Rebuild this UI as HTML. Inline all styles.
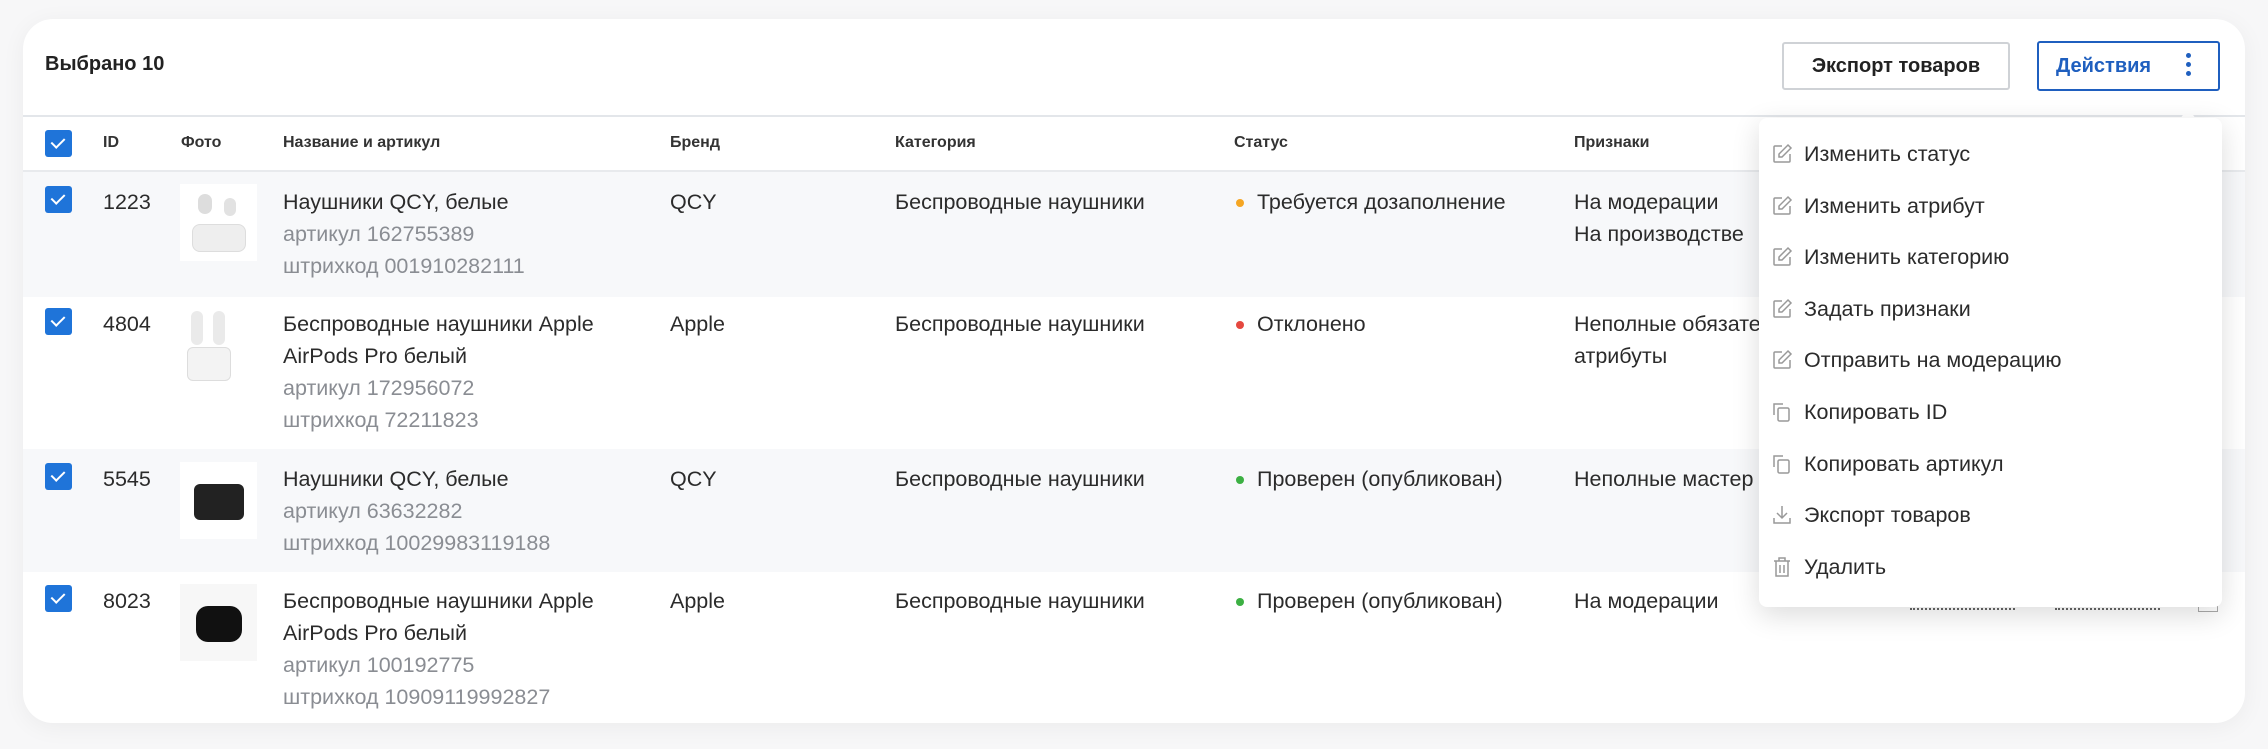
<!DOCTYPE html>
<html><head><meta charset="utf-8"><style>
*{margin:0;padding:0;box-sizing:border-box}
body{width:2268px;height:749px;background:#f7f7f8;font-family:"Liberation Sans",Arial,sans-serif;color:#222;position:relative;overflow:hidden}
.card{position:absolute;left:23px;top:19px;width:2222px;height:704px;background:#fff;border-radius:30px;box-shadow:0 4px 24px rgba(0,0,0,.05);overflow:hidden}
.a{position:absolute;white-space:nowrap}
.h{font-size:16px;font-weight:bold;color:#333;top:134px}
.t{font-size:21.5px;line-height:32px;color:#2b2b2b}
.g{color:#8a8d93}
.cb{position:absolute;width:27px;height:27px;background:#1f74d9;border-radius:3px}
.cb:after{content:"";position:absolute;left:9px;top:5px;width:6px;height:11px;border:solid #fff;border-width:0 2.5px 2.5px 0;transform:rotate(45deg)}
.dot{position:absolute;width:8px;height:8px;border-radius:50%}
.row{position:absolute;left:23px;width:2222px;background:#f7f8fa}
.menu{position:absolute;left:1759px;top:118px;width:463px;height:489px;background:#fff;border-radius:8px;box-shadow:0 8px 28px rgba(0,0,0,.14)}
.mi{position:absolute;left:45px;font-size:21.5px;color:#2b2b2b}
.ic{position:absolute;left:12px;width:22px;height:22px}
</style></head><body>
<div class="card"></div>
<div class="row" style="top:171px;height:126px"></div>
<div class="row" style="top:449px;height:123px"></div>
<div class="a" style="left:23px;top:115px;width:2222px;height:2px;background:#e3e6ea"></div>
<div class="a" style="left:23px;top:170px;width:2222px;height:2px;background:#e8eaed"></div>

<div class="a" style="left:45px;top:53px;font-size:20px;font-weight:bold;color:#222">Выбрано 10</div>
<div class="a" style="left:1782px;top:42px;width:228px;height:48px;border:2px solid #cfd2d6;border-radius:3px;font-size:20px;font-weight:bold;text-align:center;line-height:44px;color:#222">Экспорт товаров</div>
<div class="a" style="left:2037px;top:41px;width:183px;height:50px;border:2px solid #1f5fbf;border-radius:3px;font-size:20px;font-weight:bold;color:#1f5fbf;line-height:46px;padding-left:17px">Действия</div>
<div class="a" style="left:2186px;top:53px;width:5px;height:5px;border-radius:50%;background:#1f5fbf;box-shadow:0 9px 0 #1f5fbf,0 18px 0 #1f5fbf"></div>

<div class="cb" style="left:45px;top:130px"></div>
<div class="a h" style="left:103px">ID</div>
<div class="a h" style="left:181px">Фото</div>
<div class="a h" style="left:283px">Название и артикул</div>
<div class="a h" style="left:670px">Бренд</div>
<div class="a h" style="left:895px">Категория</div>
<div class="a h" style="left:1234px">Статус</div>
<div class="a h" style="left:1574px">Признаки</div>

<!-- row1 -->
<div class="cb" style="left:45px;top:186px"></div>
<div class="a t" style="left:103px;top:186px">1223</div>
<div class="a" style="left:180px;top:184px;width:77px;height:77px;background:#fff"><div style="position:absolute;left:12px;top:40px;width:54px;height:28px;border-radius:8px;background:#eee;border:1px solid #ddd"></div><div style="position:absolute;left:18px;top:10px;width:14px;height:20px;border-radius:7px;background:#ddd"></div><div style="position:absolute;left:44px;top:14px;width:12px;height:18px;border-radius:6px;background:#e2e2e2"></div></div>
<div class="a t" style="left:283px;top:186px">Наушники QCY, белые<br><span class="g">артикул 162755389<br>штрихкод 001910282111</span></div>
<div class="a t" style="left:670px;top:186px">QCY</div>
<div class="a t" style="left:895px;top:186px">Беспроводные наушники</div>
<div class="dot" style="left:1236px;top:199px;background:#f5a623"></div>
<div class="a t" style="left:1257px;top:186px">Требуется дозаполнение</div>
<div class="a t" style="left:1574px;top:186px">На модерации<br>На производстве</div>

<!-- row2 -->
<div class="cb" style="left:45px;top:308px"></div>
<div class="a t" style="left:103px;top:308px">4804</div>
<div class="a" style="left:185px;top:307px;width:50px;height:78px"><div style="position:absolute;left:2px;top:40px;width:44px;height:34px;border-radius:6px;background:#f3f3f3;border:1px solid #ddd"></div><div style="position:absolute;left:6px;top:4px;width:12px;height:34px;border-radius:6px;background:#eaeaea"></div><div style="position:absolute;left:28px;top:4px;width:12px;height:34px;border-radius:6px;background:#eaeaea"></div></div>
<div class="a t" style="left:283px;top:308px">Беспроводные наушники Apple<br>AirPods Pro белый<br><span class="g">артикул 172956072<br>штрихкод 72211823</span></div>
<div class="a t" style="left:670px;top:308px">Apple</div>
<div class="a t" style="left:895px;top:308px">Беспроводные наушники</div>
<div class="dot" style="left:1236px;top:321px;background:#e5483f"></div>
<div class="a t" style="left:1257px;top:308px">Отклонено</div>
<div class="a t" style="left:1574px;top:308px">Неполные обязательные<br>атрибуты</div>

<!-- row3 -->
<div class="cb" style="left:45px;top:463px"></div>
<div class="a t" style="left:103px;top:463px">5545</div>
<div class="a" style="left:180px;top:462px;width:77px;height:77px;background:#fff"><div style="position:absolute;left:14px;top:22px;width:50px;height:36px;border-radius:6px;background:#222"></div></div>
<div class="a t" style="left:283px;top:463px">Наушники QCY, белые<br><span class="g">артикул 63632282<br>штрихкод 10029983119188</span></div>
<div class="a t" style="left:670px;top:463px">QCY</div>
<div class="a t" style="left:895px;top:463px">Беспроводные наушники</div>
<div class="dot" style="left:1236px;top:476px;background:#3cb043"></div>
<div class="a t" style="left:1257px;top:463px">Проверен (опубликован)</div>
<div class="a t" style="left:1574px;top:463px">Неполные мастер</div>

<!-- row4 -->
<div class="cb" style="left:45px;top:585px"></div>
<div class="a t" style="left:103px;top:585px">8023</div>
<div class="a" style="left:180px;top:584px;width:77px;height:77px;background:#f7f7f7"><div style="position:absolute;left:16px;top:22px;width:46px;height:36px;border-radius:12px;background:#111"></div></div>
<div class="a t" style="left:283px;top:585px">Беспроводные наушники Apple<br>AirPods Pro белый<br><span class="g">артикул 100192775<br>штрихкод 10909119992827</span></div>
<div class="a t" style="left:670px;top:585px">Apple</div>
<div class="a t" style="left:895px;top:585px">Беспроводные наушники</div>
<div class="dot" style="left:1236px;top:598px;background:#3cb043"></div>
<div class="a t" style="left:1257px;top:585px">Проверен (опубликован)</div>
<div class="a t" style="left:1574px;top:585px">На модерации</div>
<div class="a" style="left:1910px;top:608px;width:105px;height:4px;border-top:2px dotted #666"></div>
<div class="a" style="left:2055px;top:608px;width:105px;height:4px;border-top:2px dotted #666"></div>
<div class="a" style="left:2198px;top:600px;width:20px;height:12px;border:1.5px solid #aaa;border-top:none"></div>

<!-- menu -->
<div class="a" style="left:2180px;top:108px;width:0;height:0;border-left:8px solid transparent;border-right:8px solid transparent;border-bottom:11px solid #fff"></div>
<div class="menu">
<svg class="ic" style="top:25px" viewBox="0 0 22 22" fill="none" stroke="#999" stroke-width="1.5"><path d="M11 3H4a1 1 0 0 0-1 1v14a1 1 0 0 0 1 1h14a1 1 0 0 0 1-1v-7"/><path d="M17 2l3 3-9 9H8v-3z"/></svg><div class="a mi" style="top:24px">Изменить статус</div>
<svg class="ic" style="top:77px" viewBox="0 0 22 22" fill="none" stroke="#999" stroke-width="1.5"><path d="M11 3H4a1 1 0 0 0-1 1v14a1 1 0 0 0 1 1h14a1 1 0 0 0 1-1v-7"/><path d="M17 2l3 3-9 9H8v-3z"/></svg><div class="a mi" style="top:76px">Изменить атрибут</div>
<svg class="ic" style="top:128px" viewBox="0 0 22 22" fill="none" stroke="#999" stroke-width="1.5"><path d="M11 3H4a1 1 0 0 0-1 1v14a1 1 0 0 0 1 1h14a1 1 0 0 0 1-1v-7"/><path d="M17 2l3 3-9 9H8v-3z"/></svg><div class="a mi" style="top:127px">Изменить категорию</div>
<svg class="ic" style="top:180px" viewBox="0 0 22 22" fill="none" stroke="#999" stroke-width="1.5"><path d="M11 3H4a1 1 0 0 0-1 1v14a1 1 0 0 0 1 1h14a1 1 0 0 0 1-1v-7"/><path d="M17 2l3 3-9 9H8v-3z"/></svg><div class="a mi" style="top:179px">Задать признаки</div>
<svg class="ic" style="top:231px" viewBox="0 0 22 22" fill="none" stroke="#999" stroke-width="1.5"><path d="M11 3H4a1 1 0 0 0-1 1v14a1 1 0 0 0 1 1h14a1 1 0 0 0 1-1v-7"/><path d="M17 2l3 3-9 9H8v-3z"/></svg><div class="a mi" style="top:230px">Отправить на модерацию</div>
<svg class="ic" style="top:283px" viewBox="0 0 22 22" fill="none" stroke="#999" stroke-width="1.5"><path d="M3 14V3h9"/><rect x="7" y="7" width="11" height="13" rx="1.5"/></svg><div class="a mi" style="top:282px">Копировать ID</div>
<svg class="ic" style="top:335px" viewBox="0 0 22 22" fill="none" stroke="#999" stroke-width="1.5"><path d="M3 14V3h9"/><rect x="7" y="7" width="11" height="13" rx="1.5"/></svg><div class="a mi" style="top:334px">Копировать артикул</div>
<svg class="ic" style="top:386px" viewBox="0 0 22 22" fill="none" stroke="#999" stroke-width="1.5"><path d="M11 2v12M6 9l5 5 5-5M3 14v5h16v-5"/></svg><div class="a mi" style="top:385px">Экспорт товаров</div>
<svg class="ic" style="top:438px" viewBox="0 0 22 22" fill="none" stroke="#999" stroke-width="1.5"><path d="M3 5h16M8 5V2h6v3M5 5v15h12V5M9 9v8M13 9v8"/></svg><div class="a mi" style="top:437px">Удалить</div>
</div>
</body></html>
